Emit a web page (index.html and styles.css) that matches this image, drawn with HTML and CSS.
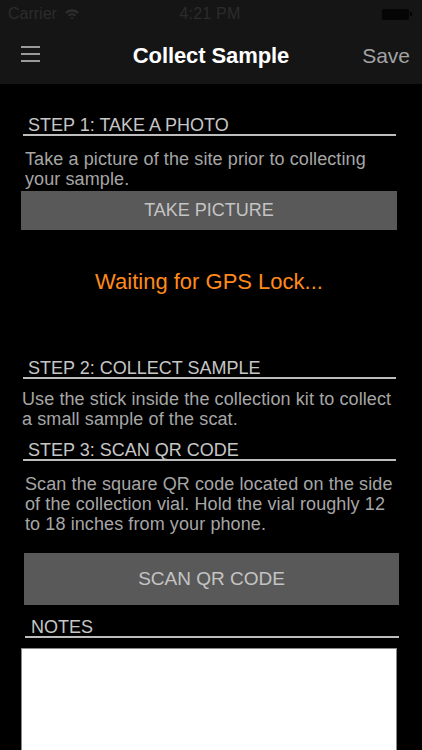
FILE: index.html
```html
<!DOCTYPE html>
<html lang="en">
<head>
<meta charset="utf-8">
<title>Collect Sample</title>
<link rel="stylesheet" href="styles.css">
</head>
<body>
<div class="phone">
  <header class="topbar">
    <div class="status">
      <div class="status-left">
        <span class="carrier">Carrier</span>
        <svg class="wifi" width="16" height="12" viewBox="0 0 16 12">
          <path d="M1 4.2 A10 10 0 0 1 15 4.2 L13.4 5.8 A7.8 7.8 0 0 0 2.6 5.8 Z" fill="#2e2e2e"/>
          <path d="M3.7 6.9 A6.3 6.3 0 0 1 12.3 6.9 L10.7 8.5 A4 4 0 0 0 5.3 8.5 Z" fill="#2e2e2e"/>
          <path d="M6.4 9.6 A2.4 2.4 0 0 1 9.6 9.6 L8 11.3 Z" fill="#2e2e2e"/>
        </svg>
      </div>
      <span class="time">4:21 PM</span>
      <div class="battery"><span class="battery-body"></span><span class="battery-nub"></span></div>
    </div>
    <nav class="nav">
      <div class="menu" aria-label="Menu">
        <span></span><span></span><span></span>
      </div>
      <h1 class="title">Collect Sample</h1>
      <span class="save">Save</span>
    </nav>
  </header>

  <main class="content">
    <h2 class="step step-1">STEP 1: TAKE A PHOTO</h2>
    <p class="desc desc-1">Take a picture of the site prior to collecting your sample.</p>
    <div class="btn btn-photo">TAKE PICTURE</div>

    <p class="gps">Waiting for GPS Lock...</p>

    <h2 class="step step-2">STEP 2: COLLECT SAMPLE</h2>
    <p class="desc desc-2">Use the stick inside the collection kit to collect a small sample of the scat.</p>

    <h2 class="step step-3">STEP 3: SCAN QR CODE</h2>
    <p class="desc desc-3">Scan the square QR code located on the side of the collection vial. Hold the vial roughly 12 to 18 inches from your phone.</p>
    <div class="btn btn-scan">SCAN QR CODE</div>

    <h2 class="step step-notes">NOTES</h2>
    <div class="notes"></div>
  </main>
</div>
</body>
</html>
```

FILE: styles.css
```css
* { box-sizing: border-box; }

html, body {
  margin: 0;
  padding: 0;
  background: #000;
}

body {
  font-family: "Liberation Sans", Arial, sans-serif;
  width: 422px;
  height: 750px;
  overflow: hidden;
}

.phone {
  width: 422px;
  height: 750px;
  overflow: hidden;
  background: #000;
}

/* ---------- top bar ---------- */
.topbar {
  background: #151515;
  height: 84px;
}

.status {
  height: 28px;
  display: flex;
  align-items: center;
  justify-content: space-between;
  padding: 0 10px 0 8px;
  color: #2c2c2c;
  font-size: 16px;
}

.status-left {
  display: flex;
  align-items: center;
  gap: 7px;
  width: 120px;
}

.time {
  font-size: 16px;
  letter-spacing: 0.2px;
}

.battery {
  width: 120px;
  display: flex;
  justify-content: flex-end;
  align-items: center;
}

.battery-body {
  width: 27px;
  height: 11px;
  background: #050505;
  border-radius: 2px;
}

.battery-nub {
  width: 2px;
  height: 4px;
  background: #050505;
  margin-left: 1px;
}

.nav {
  height: 56px;
  display: grid;
  grid-template-columns: 1fr auto 1fr;
  align-items: center;
  padding: 0 12px 0 12px;
}

.menu {
  display: flex;
  flex-direction: column;
  gap: 5.5px;
  margin: -4px 0 0 9px;
}

.menu span {
  display: block;
  width: 19px;
  height: 1.5px;
  background: #9a9a9a;
}

.title {
  margin: 0;
  color: #fff;
  font-size: 22px;
  font-weight: bold;
  line-height: 56px;
  letter-spacing: -0.1px;
}

.save {
  text-align: right;
  color: #a3a3a3;
  font-size: 21px;
  line-height: 56px;
}

/* ---------- content ---------- */
.content {
  padding-top: 33px;
}

.step {
  margin: 0 26px 0 23px;
  padding-left: 5px;
  font-size: 18px;
  font-weight: normal;
  line-height: 17px;
  color: #c6c6c6;
  border-bottom: 2px solid #bdbdbd;
}

.desc {
  margin: 13px 26px 0 25px;
  font-size: 18px;
  line-height: 20px;
  letter-spacing: 0.1px;
  color: #a6a6a6;
}

.btn {
  display: flex;
  align-items: center;
  justify-content: center;
  background: #595959;
  color: #c4c4c4;
}

.btn-photo {
  margin: 2px 25px 0 21px;
  height: 39px;
  font-size: 18px;
}

.gps {
  margin: 39px 0 0;
  height: 26px;
  line-height: 26px;
  text-align: center;
  font-size: 22px;
  color: #ff8a1c;
  padding-right: 4px;
}

.step-2 { margin-top: 65px; }

.desc-2 {
  margin: 10px 24px 0 22px;
}

.step-3 { margin-top: 13px; }

.desc-3 { margin-top: 13px; }

.btn-scan {
  margin: 19px 23px 0 24px;
  height: 52px;
  font-size: 19px;
}

.step-notes {
  margin: 14px 23px 0 25px;
  padding-left: 6px;
}

.notes {
  margin: 10px 25px 0 21px;
  height: 120px;
  background: #fff;
  border: 1px solid #8a8a8a;
  border-bottom: none;
}
```
